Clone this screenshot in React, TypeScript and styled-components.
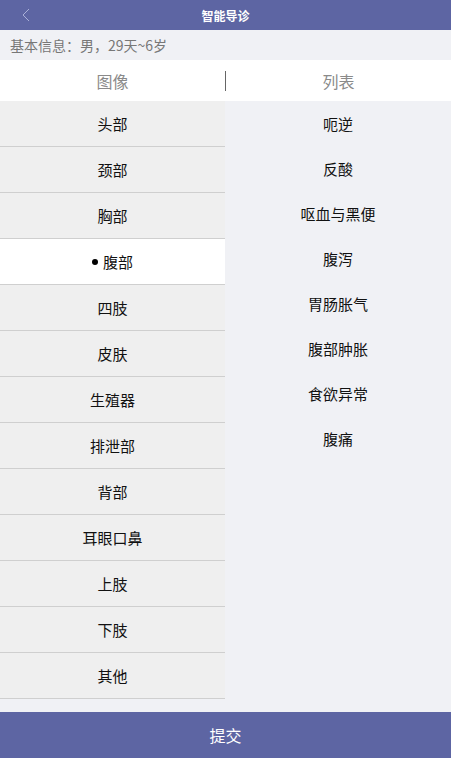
import React, { useState } from "react";
import styled, { createGlobalStyle } from "styled-components";

const Global = createGlobalStyle`
  html, body { margin: 0; padding: 0; }
  body {
    background: #f0f1f5;
    font-family: "Microsoft YaHei", "Noto Sans CJK SC", "Liberation Sans", sans-serif;
  }
`;

const Page = styled.div`
  width: 451px;
  height: 758px;
  display: flex;
  flex-direction: column;
  background: #f0f1f5;
  overflow: hidden;
`;

const Header = styled.div`
  height: 30px;
  flex: none;
  background: #5d65a3;
  display: grid;
  grid-template-columns: 60px 1fr 60px;
  align-items: center;
`;

const Back = styled.div`
  display: flex;
  align-items: center;
  padding-left: 22px;
  height: 30px;
`;

const Title = styled.div`
  text-align: center;
  color: #ffffff;
  font-size: 12px;
  font-weight: bold;
`;

const Info = styled.div`
  height: 30px;
  flex: none;
  display: flex;
  align-items: center;
  padding-left: 10px;
  font-size: 14px;
  color: #777;
`;

const Tabs = styled.div`
  height: 41px;
  flex: none;
  background: #fff;
  display: grid;
  grid-template-columns: 225px 1px 1fr;
  align-items: center;
`;

const Tab = styled.div`
  text-align: center;
  font-size: 16px;
  color: #8a8a8a;
`;

const Divider = styled.div`
  width: 1px;
  height: 20px;
  background: #666;
`;

const Body = styled.div`
  flex: 1;
  display: grid;
  grid-template-columns: 225px 1fr;
  align-items: start;
`;

const LeftList = styled.div`
  display: flex;
  flex-direction: column;
  background: #efefef;
`;

const LeftItem = styled.div<{ $active: boolean }>`
  height: 45px;
  border-bottom: 1px solid #cfcfcf;
  display: flex;
  align-items: center;
  justify-content: center;
  font-size: 15px;
  color: #111;
  background: ${(p) => (p.$active ? "#ffffff" : "#efefef")};
  cursor: pointer;
`;

const Dot = styled.span`
  width: 6px;
  height: 6px;
  border-radius: 50%;
  background: #000;
  margin-right: 5px;
`;

const RightList = styled.div`
  display: flex;
  flex-direction: column;
`;

const RightItem = styled.div`
  height: 45px;
  display: flex;
  align-items: center;
  justify-content: center;
  font-size: 15px;
  color: #111;
`;

const Submit = styled.div`
  height: 46px;
  flex: none;
  background: #5d65a3;
  color: #fff;
  font-size: 16px;
  display: flex;
  align-items: center;
  justify-content: center;
`;

const parts = ["头部", "颈部", "胸部", "腹部", "四肢", "皮肤", "生殖器", "排泄部", "背部", "耳眼口鼻", "上肢", "下肢", "其他"];
const symptoms = ["呃逆", "反酸", "呕血与黑便", "腹泻", "胃肠胀气", "腹部肿胀", "食欲异常", "腹痛"];

export default function App() {
  const [active, setActive] = useState(3);
  return (
    <Page>
      <Global />
      <Header>
        <Back>
          <svg width="8" height="14" viewBox="0 0 8 14">
            <path d="M7 1 L1 7 L7 13" fill="none" stroke="#aab0d8" strokeWidth="1" />
          </svg>
        </Back>
        <Title>智能导诊</Title>
        <div />
      </Header>
      <Info>基本信息：男，29天~6岁</Info>
      <Tabs>
        <Tab>图像</Tab>
        <Divider />
        <Tab>列表</Tab>
      </Tabs>
      <Body>
        <LeftList>
          {parts.map((p, i) => (
            <LeftItem key={p} $active={i === active} onClick={() => setActive(i)}>
              {i === active && <Dot />}
              {p}
            </LeftItem>
          ))}
        </LeftList>
        <RightList>
          {symptoms.map((s) => (
            <RightItem key={s}>{s}</RightItem>
          ))}
        </RightList>
      </Body>
      <Submit>提交</Submit>
    </Page>
  );
}
